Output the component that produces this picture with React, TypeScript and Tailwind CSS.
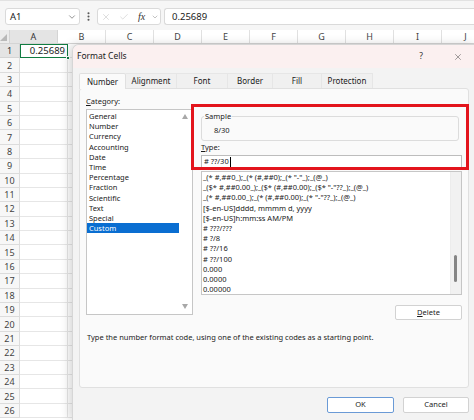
import { ChevronDown, X, Check, EllipsisVertical } from "lucide-react";

const categories = [
  "General",
  "Number",
  "Currency",
  "Accounting",
  "Date",
  "Time",
  "Percentage",
  "Fraction",
  "Scientific",
  "Text",
  "Special",
  "Custom",
];

const formats = [
  '_(* #,##0_);_(* (#,##0);_(* "-"_);_(@_)',
  '_($* #,##0.00_);_($* (#,##0.00);_($* "-"??_);_(@_)',
  '_(* #,##0.00_);_(* (#,##0.00);_(* "-"??_);_(@_)',
  "[$-en-US]dddd, mmmm d, yyyy",
  "[$-en-US]h:mm:ss AM/PM",
  "# ???/???",
  "# ?/8",
  "# ??/16",
  "# ??/100",
  "0.000",
  "0.0000",
  "0.00000",
];

const cols = ["A", "B", "C", "D", "E", "F", "G", "H", "I", "J"];
const rows = Array.from({ length: 26 }, (_, i) => i + 1);

const tabs = [
  { label: "Number", w: "w-[47px]", sel: true },
  { label: "Alignment", w: "w-[51px]", sel: false },
  { label: "Font", w: "w-[51px]", sel: false },
  { label: "Border", w: "w-[45px]", sel: false },
  { label: "Fill", w: "w-[49px]", sel: false },
  { label: "Protection", w: "w-[51px]", sel: false },
];

export default function App() {
  return (
    <div className="relative w-[474px] h-[420px] overflow-hidden bg-white font-['Noto_Sans',sans-serif] text-[#222]">
      {/* Formula bar */}
      <div className="h-[30px] bg-[#f6f6f6] border-t border-[#e2e2e2] flex items-start pt-[7px]">
        <div className="ml-[5px] w-[75px] h-[17px] bg-white border border-[#dadada] rounded-[3px] flex items-center justify-between pl-[4px] pr-[2px]">
          <span className="text-[9.5px] leading-none">A1</span>
          <ChevronDown size={10} strokeWidth={1.5} className="text-[#555]" />
        </div>
        <div className="w-[17px] h-[17px] flex items-center justify-center text-[#555]">
          <EllipsisVertical size={11} strokeWidth={2.5} />
        </div>
        <div className="w-[64px] h-[17px] bg-white border border-[#dadada] rounded-[3px] flex items-center pl-[3px]">
          <X size={10} strokeWidth={1.2} className="text-[#bdbdbd]" />
          <Check size={10} strokeWidth={1.2} className="ml-[8px] text-[#bdbdbd]" />
          <span className="ml-[9px] w-[11px] text-[10px] leading-none italic font-['Liberation_Serif',serif] text-[#333]">
            fx
          </span>
          <ChevronDown size={8} strokeWidth={1.5} className="ml-[2px] text-[#888]" />
        </div>
        <div className="ml-[3px] flex-1 h-[17px] bg-white border border-r-0 border-[#dadada] rounded-l-[3px] flex items-center pl-[7px]">
          <span className="text-[9.5px] leading-none">0.25689</span>
        </div>
      </div>

      {/* Column headers */}
      <div className="flex h-[14px] border-b border-[#d4d4d4]">
        <div className="w-[20px] h-full bg-[#ececec] border-r border-[#d4d4d4] flex items-end justify-end pr-[2px] pb-[2px]">
          <svg width="7" height="7" viewBox="0 0 7 7">
            <polygon points="7,0 7,7 0,7" fill="#b9b9b9" />
          </svg>
        </div>
        {cols.map((c, i) => (
          <div
            key={c}
            className={
              i === 0
                ? "w-[48px] shrink-0 h-full bg-[#e4e4e4] border-r border-[#d4d4d4] flex items-center justify-center text-[9px] text-[#333]"
                : "w-[48px] shrink-0 h-full bg-white border-r border-[#e1e1e1] flex items-center justify-center text-[9px] text-[#444]"
            }
          >
            {c}
          </div>
        ))}
      </div>

      {/* Grid rows */}
      <div className="flex flex-col">
        {rows.map((r) => (
          <div key={r} className="flex h-[14.4px] shrink-0">
            <div
              className={
                r === 1
                  ? "w-[20px] shrink-0 h-full bg-[#e4e4e4] border-r border-b border-[#d4d4d4] flex items-center justify-center text-[9px] leading-none text-[#333]"
                  : "w-[20px] shrink-0 h-full bg-[#f7f7f7] border-r border-b border-[#dcdcdc] flex items-center justify-center text-[9px] leading-none text-[#444]"
              }
            >
              {r}
            </div>
            {cols.map((c, i) => (
              <div
                key={c}
                className={
                  r === 1 && i === 0
                    ? "relative w-[48px] shrink-0 h-full border-[1.5px] border-[#107c41] flex items-center justify-end pr-[2px] text-[9.5px] leading-none"
                    : "w-[48px] shrink-0 h-full border-r border-b border-[#e6e6e6]"
                }
              >
                {r === 1 && i === 0 && (
                  <>
                    0.25689
                    <span className="absolute -right-[3px] -bottom-[3px] w-[4px] h-[4px] bg-[#107c41] border border-white" />
                  </>
                )}
              </div>
            ))}
          </div>
        ))}
      </div>

      {/* Format Cells dialog */}
      <div className="absolute left-[72px] top-[44px] w-[404px] h-[376px] flex flex-col bg-[#f3f3f3] rounded-tl-[7px] border-l border-t border-[#d6d6d6] shadow-[-3px_0_10px_rgba(0,0,0,0.16)] overflow-hidden">
        {/* Title bar */}
        <div className="h-[23px] shrink-0 bg-[#fbf0f0] flex items-center pl-[4px]">
          <span className="text-[8.5px] leading-none text-[#1a1a1a]">Format Cells</span>
          <span className="ml-auto mr-[30px] text-[8.5px] leading-none text-[#333]">?</span>
          <X size={10} strokeWidth={1.1} className="mr-[13px] text-[#333]" />
        </div>

        {/* Tabs */}
        <div className="relative z-10 mt-[5px] pl-[6px] flex h-[15px] shrink-0 bg-[#f3f3f3]">
          {tabs.map((t) =>
            t.sel ? (
              <div
                key={t.label}
                className={`${t.w} h-[16px] bg-[#fafafa] border border-b-0 border-[#e0e0e0] rounded-t-[2px] flex items-center justify-center text-[8px] leading-none text-[#1a1a1a]`}
              >
                {t.label}
              </div>
            ) : (
              <div
                key={t.label}
                className={`${t.w} h-[15px] bg-[#f0f0f0] border-r border-t border-[#e6e6e6] flex items-center justify-center text-[8px] leading-none text-[#1a1a1a]`}
              >
                {t.label}
              </div>
            )
          )}
        </div>

        {/* Panel */}
        <div className="ml-[6px] w-[390px] h-[300px] shrink-0 bg-[#fafafa] border border-[#e0e0e0] rounded-[3px] pl-[6px] pt-[7px] flex flex-col text-[7.5px] text-[#1a1a1a]">
          <div className="flex">
            {/* Category */}
            <div className="w-[107px] flex flex-col">
              <div className="h-[10px] leading-[10px] mb-[3px]">
                <span className="underline">C</span>ategory:
              </div>
              <div className="relative h-[206px] bg-white border border-[#c6c6c6] pt-[1px]">
                {categories.map((c) => (
                  <div
                    key={c}
                    className={
                      c === "Custom"
                        ? "h-[10.2px] leading-[10.2px] w-[92px] pl-[2px] bg-[#0a6ed1] text-white"
                        : "h-[10.2px] leading-[10.2px] pl-[2px]"
                    }
                  >
                    {c}
                  </div>
                ))}
                <svg className="absolute right-[4px] top-[4px]" width="6" height="5" viewBox="0 0 6 5">
                  <polygon points="3,0 6,5 0,5" fill="#a8a8a8" />
                </svg>
                <svg className="absolute right-[4px] bottom-[5px]" width="6" height="5" viewBox="0 0 6 5">
                  <polygon points="0,0 6,0 3,5" fill="#a8a8a8" />
                </svg>
              </div>
            </div>

            {/* Right column */}
            <div className="ml-[8px] w-[261px] flex flex-col">
              <div className="relative mt-[20px] w-[258px] h-[25px] border border-[#dcdcdc] rounded-[3px] pl-[12px] pt-[8px]">
                <span className="absolute -top-[6px] left-[2px] px-[1px] bg-[#fafafa] leading-[10px]">Sample</span>
                <div className="leading-[10px]">8/30</div>
              </div>
              <div className="mt-[1px] h-[10px] leading-[10px]">
                <span className="underline">T</span>ype:
              </div>
              <div className="mt-[3px] h-[14px] bg-white border border-[#bdbdbd] flex items-center pl-[2px]">
                <span className="leading-none">
                  # ??/30
                </span>
                <span className="ml-[1px] w-[1px] h-[10px] bg-black" />
              </div>
              <div className="relative mt-[2px] h-[124px] bg-white border border-[#c6c6c6] overflow-hidden">
                {formats.map((f) => (
                  <div key={f} className="h-[10.2px] leading-[10.2px] pl-[1px] whitespace-pre">
                    {f}
                  </div>
                ))}
                <div className="absolute right-0 top-0 bottom-0 w-[11px] bg-[#f1f1f1] border-l border-[#ececec]">
                  <div className="absolute left-[3px] top-[83px] w-[3px] h-[27px] rounded-[2px] bg-[#858585]" />
                </div>
              </div>
              <div className="mt-[10px] self-end w-[67px] h-[15px] bg-white border border-[#d2d2d2] rounded-[2px] flex items-center justify-center leading-none">
                <span>
                  <span className="underline">D</span>elete
                </span>
              </div>
            </div>
          </div>
          <div className="mt-[12px] ml-[1px] leading-[10px]">
            Type the number format code, using one of the existing codes as a starting point.
          </div>
        </div>

        {/* Footer */}
        <div className="flex-1 flex justify-end items-start pt-[9px] pr-[7px] gap-[9px]">
          <div className="w-[67px] h-[16px] bg-white border border-[#6a9ad6] rounded-[2px] flex items-center justify-center text-[7.5px] leading-none text-[#1a1a1a]">
            OK
          </div>
          <div className="w-[66px] h-[16px] bg-white border border-[#d2d2d2] rounded-[2px] flex items-center justify-center text-[7.5px] leading-none text-[#1a1a1a]">
            Cancel
          </div>
        </div>
      </div>

      {/* Red highlight annotation */}
      <div className="absolute left-[191px] top-[104px] w-[278px] h-[66px] border-[3px] border-[#e3141c] pointer-events-none" />
    </div>
  );
}
